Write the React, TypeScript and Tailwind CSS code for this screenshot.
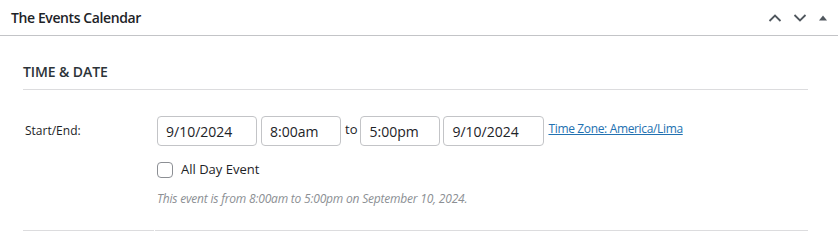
import React from "react";

export default function App() {
  const font = { fontFamily: '"Segoe UI", "Open Sans", "Noto Sans", sans-serif' };
  return (
    <div className="w-[838px] h-[246px] bg-white text-[#1d2327] overflow-hidden" style={font}>
      <div className="h-[36px] flex items-center justify-between border-b border-[#c3c4c7] pl-[11px] pr-[10px]">
        <div className="text-[14px] font-semibold tracking-[-0.4px]">The Events Calendar</div>
        <div className="flex items-center gap-[11px] text-[#50575e]">
          <svg width="14" height="10" viewBox="0 0 14 10"><path d="M1.5 8 L7 2.5 L12.5 8" fill="none" stroke="currentColor" strokeWidth="1.8" /></svg>
          <svg width="14" height="10" viewBox="0 0 14 10"><path d="M1.5 2 L7 7.5 L12.5 2" fill="none" stroke="currentColor" strokeWidth="1.8" /></svg>
          <svg width="10" height="10" viewBox="0 0 10 10"><path d="M1 7.5 L5 2.5 L9 7.5 Z" fill="currentColor" /></svg>
        </div>
      </div>
      <div className="pl-[23px] pr-[30px]">
        <div className="h-[54px] flex items-end pb-[7px] border-b border-[#dcdcde] text-[14px] font-semibold text-[#2c3338] tracking-[-0.1px]">
          TIME &amp; DATE
        </div>
        <div className="flex pt-[26px] pb-[22px]">
          <div className="w-[134px] pl-[2px] pt-[6px] text-[12px]">Start/End:</div>
          <div className="flex flex-col">
            <div className="flex items-center text-[14px]">
              <div className="w-[100px] h-[30px] border border-[#c3c4c7] rounded-[4px] px-[8px] flex items-center">9/10/2024</div>
              <div className="ml-[4px] w-[80px] h-[30px] border border-[#c3c4c7] rounded-[4px] px-[8px] flex items-center">8:00am</div>
              <span className="ml-[4px] mr-[3px] text-[13px] mb-[2px]">to</span>
              <div className="w-[80px] h-[30px] border border-[#c3c4c7] rounded-[4px] px-[8px] flex items-center">5:00pm</div>
              <div className="ml-[3px] w-[101px] h-[30px] border border-[#c3c4c7] rounded-[4px] px-[8px] flex items-center">9/10/2024</div>
              <a className="ml-[4px] text-[12px] tracking-[-0.35px] text-[#2271b1] underline mb-[4px]">Time Zone: America/Lima</a>
            </div>
            <div className="flex items-center mt-[14px] text-[13px]">
              <span className="w-[16px] h-[16px] border border-[#8c8f94] rounded-[4px] bg-white" />
              <span className="ml-[8px]">All Day Event</span>
            </div>
            <div className="mt-[10px] text-[12px] tracking-[-0.2px] italic text-[#8c8f94]">
              This event is from 8:00am to 5:00pm on September 10, 2024.
            </div>
          </div>
        </div>
        <div className="flex">
          <div className="w-[131px] border-b border-[#dcdcde]" />
          <div className="w-[1px]" />
          <div className="flex-1 border-b border-[#dcdcde]" />
        </div>
      </div>
    </div>
  );
}
